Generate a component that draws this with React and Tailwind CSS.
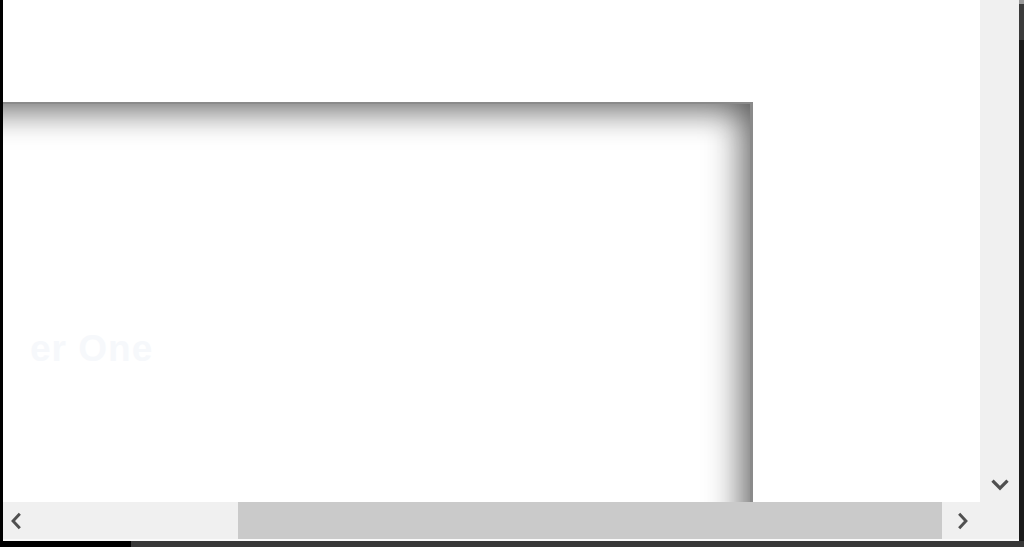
import React from "react";

function Chevron({ dir, className }) {
  const paths = {
    down: "M2 4.5 L8 10.5 L14 4.5",
    left: "M10.5 1.5 L4.5 8 L10.5 14.5",
    right: "M5.5 1.5 L11.5 8 L5.5 14.5",
  };
  return (
    <svg viewBox="0 0 16 16" className={className} fill="none" stroke="#505050" strokeWidth="2.6" strokeLinecap="butt" strokeLinejoin="miter">
      <path d={paths[dir]} />
    </svg>
  );
}

export default function App() {
  return (
    <div className="w-[1024px] h-[547px] flex flex-col overflow-hidden bg-black" style={{ fontFamily: '"Liberation Sans", Arial, sans-serif' }}>
      <div className="flex-1 flex min-h-0">
        <div className="w-[3px] bg-black" />
        <div className="flex-1 flex flex-col min-w-0">
          <div className="flex-1 flex min-h-0">
            <div className="flex-1 bg-white flex flex-col min-w-0 overflow-hidden">
              <div className="h-[102px] shrink-0" />
              <div className="w-[800px] ml-[-50px] h-[460px] shrink-0 bg-white border-t-2 border-r-[3px] border-[#8a8a8a] shadow-[inset_0_16px_32px_-6px_rgba(0,0,0,0.4),inset_-18px_0_34px_-6px_rgba(0,0,0,0.42)] pt-[226px] pl-[77px]">
                <div className="text-[37px] font-bold leading-none tracking-[1px] text-[#f6f8fb]">er One</div>
              </div>
            </div>
            <div className="w-[39px] bg-[#f0f0f0] flex flex-col justify-end items-center pb-[7px]">
              <Chevron dir="down" className="w-[20px] h-[20px]" />
            </div>
          </div>
          <div className="h-[37px] bg-[#f0f0f0] flex items-stretch">
            <div className="w-[28px] flex items-center justify-center">
              <Chevron dir="left" className="w-[18px] h-[18px]" />
            </div>
            <div className="w-[207px]" />
            <div className="w-[704px] bg-[#cacaca]" />
            <div className="flex-1 flex items-center justify-start pl-[11px]">
              <Chevron dir="right" className="w-[18px] h-[18px]" />
            </div>
          </div>
          <div className="h-[2px] bg-[#fafafa]" />
        </div>
        <div className="w-[5px] flex flex-col">
          <div className="h-[4px] bg-[#9a9a9a]" />
          <div className="h-[36px] bg-[#3a3a3a]" />
          <div className="flex-1 bg-[#1a1a1a]" />
        </div>
      </div>
      <div className="h-[6px] flex shrink-0">
        <div className="w-[131px] bg-black" />
        <div className="flex-1 bg-[#383838]" />
      </div>
    </div>
  );
}
